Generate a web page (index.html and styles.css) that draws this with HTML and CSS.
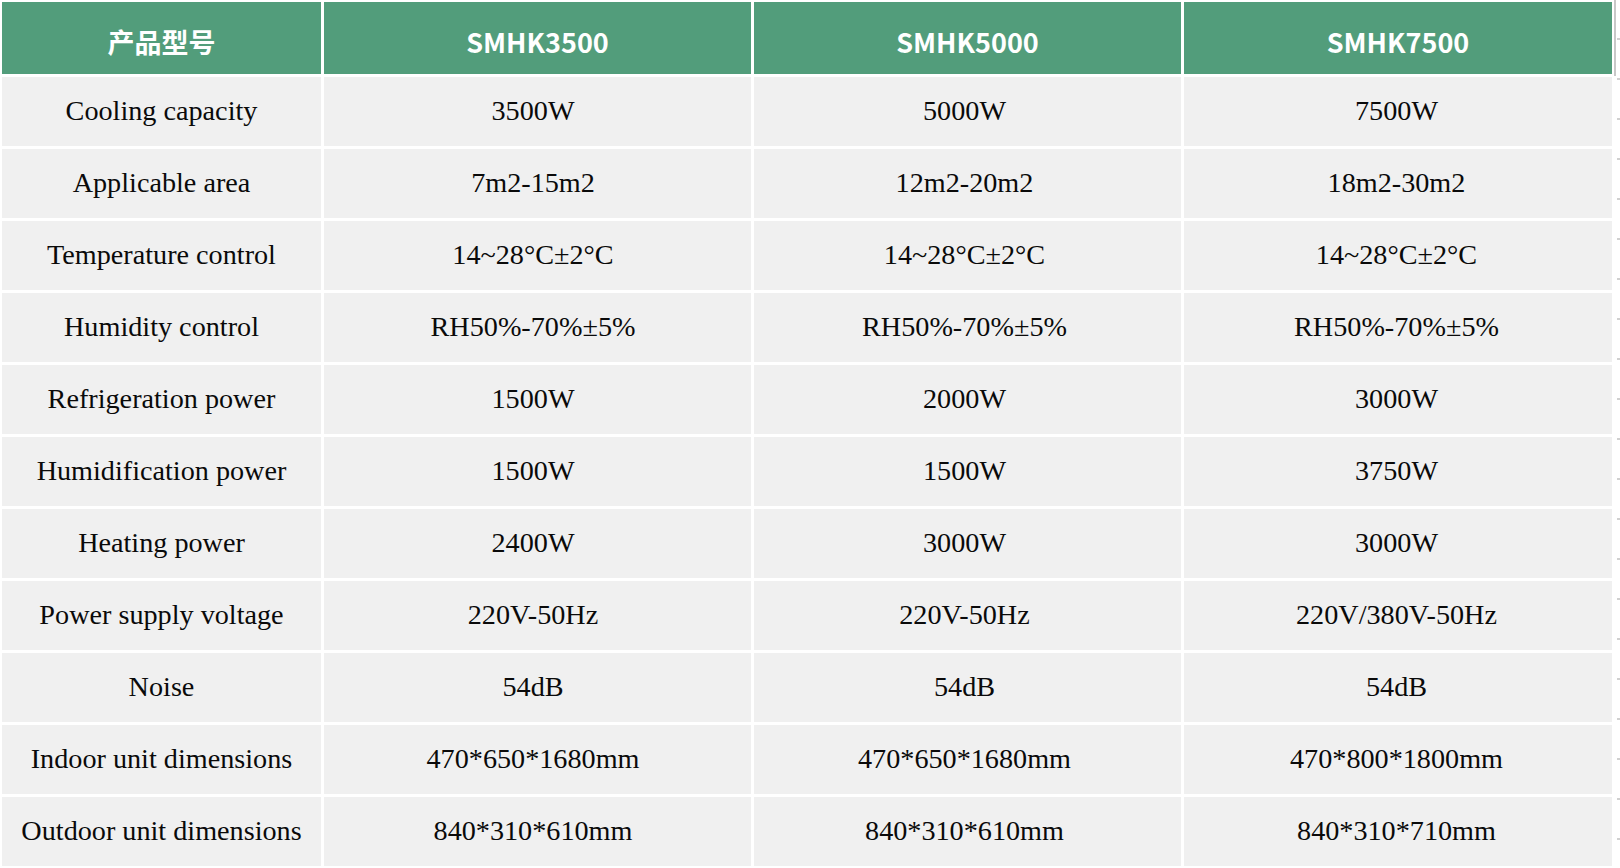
FILE: index.html
```html
<!DOCTYPE html>
<html lang="en">
<head>
<meta charset="utf-8">
<title>Product specifications</title>
<link rel="stylesheet" href="styles.css">
</head>
<body>
<div class="page">
  <div class="spec-table">
    <div class="cell head">产品型号</div>
    <div class="cell head">SMHK3500</div>
    <div class="cell head">SMHK5000</div>
    <div class="cell head">SMHK7500</div>

    <div class="cell">Cooling capacity</div>
    <div class="cell">3500W</div>
    <div class="cell">5000W</div>
    <div class="cell">7500W</div>

    <div class="cell">Applicable area</div>
    <div class="cell">7m2-15m2</div>
    <div class="cell">12m2-20m2</div>
    <div class="cell">18m2-30m2</div>

    <div class="cell">Temperature control</div>
    <div class="cell">14~28°C±2°C</div>
    <div class="cell">14~28°C±2°C</div>
    <div class="cell">14~28°C±2°C</div>

    <div class="cell">Humidity control</div>
    <div class="cell">RH50%-70%±5%</div>
    <div class="cell">RH50%-70%±5%</div>
    <div class="cell">RH50%-70%±5%</div>

    <div class="cell">Refrigeration power</div>
    <div class="cell">1500W</div>
    <div class="cell">2000W</div>
    <div class="cell">3000W</div>

    <div class="cell">Humidification power</div>
    <div class="cell">1500W</div>
    <div class="cell">1500W</div>
    <div class="cell">3750W</div>

    <div class="cell">Heating power</div>
    <div class="cell">2400W</div>
    <div class="cell">3000W</div>
    <div class="cell">3000W</div>

    <div class="cell">Power supply voltage</div>
    <div class="cell">220V-50Hz</div>
    <div class="cell">220V-50Hz</div>
    <div class="cell">220V/380V-50Hz</div>

    <div class="cell">Noise</div>
    <div class="cell">54dB</div>
    <div class="cell">54dB</div>
    <div class="cell">54dB</div>

    <div class="cell">Indoor unit dimensions</div>
    <div class="cell">470*650*1680mm</div>
    <div class="cell">470*650*1680mm</div>
    <div class="cell">470*800*1800mm</div>

    <div class="cell">Outdoor unit dimensions</div>
    <div class="cell">840*310*610mm</div>
    <div class="cell">840*310*610mm</div>
    <div class="cell">840*310*710mm</div>
  </div>
  <div class="edge"></div>
</div>
</body>
</html>
```

FILE: styles.css
```css
html, body {
  margin: 0;
  padding: 0;
  background: #ffffff;
}

.page {
  display: flex;
  align-items: stretch;
  padding: 2px 0 0 2px;
  width: 1620px;
  height: 868px;
  box-sizing: border-box;
  overflow: hidden;
}

.spec-table {
  display: grid;
  grid-template-columns: 319px 427px 427px 428px;
  grid-template-rows: 72px repeat(11, 69px);
  column-gap: 3px;
  row-gap: 3px;
  align-self: flex-start;
}

.cell {
  background: #f0f0f0;
  display: flex;
  align-items: center;
  justify-content: center;
  font-family: "Liberation Serif", "Times New Roman", serif;
  font-size: 28.2px;
  color: #0a0a0a;
  white-space: nowrap;
  box-sizing: border-box;
  padding-bottom: 2px;
}

.cell:nth-child(4n+2) {
  padding-right: 9px;
}

.cell:nth-child(4n+3) {
  padding-right: 6px;
}

.cell:nth-child(4n+4) {
  padding-right: 3px;
}

.cell.head {
  background: #529d7b;
  color: #ffffff;
  font-family: "Noto Sans CJK SC", "Noto Sans", sans-serif;
  font-weight: 700;
  font-size: 27px;
  line-height: 1;
  padding: 6px 0 0 0;
}

.edge {
  width: 8px;
  margin-left: 1px;
  margin-top: -2px;
  background:
    linear-gradient(#c8c8c8, #c8c8c8) 1px 0 / 2px 76px no-repeat,
    repeating-linear-gradient(to bottom, transparent 0, transparent 38px, #d0d0d0 38px, #d0d0d0 40px) 4px 0 / 4px 100% no-repeat;
}
```
